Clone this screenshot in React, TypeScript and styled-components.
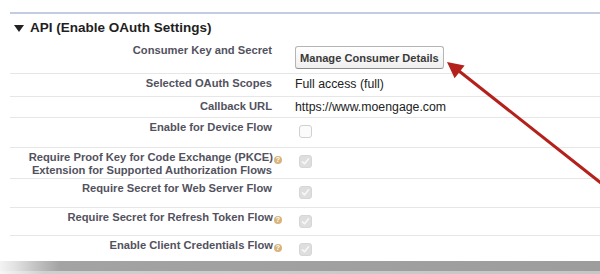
import React from "react";
import styled, { createGlobalStyle } from "styled-components";

const Global = createGlobalStyle`
  html, body { margin: 0; padding: 0; background: #fff; }
  body { font-family: "Liberation Sans", Arial, sans-serif; width: 600px; height: 274px; overflow: hidden; }
`;

const Page = styled.div`
  position: relative;
  width: 600px;
  height: 274px;
  padding-top: 12px;
  box-sizing: border-box;
  display: flex;
  flex-direction: column;
`;

const Section = styled.div`
  margin-left: 10px;
  border-top: 2px solid #c3cce0;
  display: flex;
  flex-direction: column;
`;

const Header = styled.div`
  height: 27px;
  box-sizing: border-box;
  padding: 0 0 0 4px;
  display: flex;
  align-items: center;
  align-self: flex-start;
  gap: 6px;
  font-weight: bold;
  font-size: 13.5px;
  line-height: 14px;
  color: #1f1f1f;
`;

const Caret = styled.span`
  width: 0;
  height: 0;
  border-left: 5px solid transparent;
  border-right: 5px solid transparent;
  border-top: 7px solid #222;
  margin-top: 1px;
`;

const Row = styled.div<{ $h: number; $last?: boolean }>`
  display: grid;
  grid-template-columns: 262px 1fr;
  column-gap: 23px;
  height: ${(p) => p.$h}px;
  box-sizing: border-box;
  border-bottom: ${(p) => (p.$last ? "none" : "1px solid #e6e6e6")};
`;

const Label = styled.div`
  text-align: right;
  padding-top: 3px;
  font-weight: bold;
  font-size: 11.2px;
  line-height: 12px;
  color: #52525e;
  white-space: nowrap;
`;

const Value = styled.div`
  padding-top: 3px;
  font-size: 12.3px;
  line-height: 14px;
  color: #222;
  white-space: nowrap;
`;

const Help = styled.span`
  display: inline-block;
  width: 8px;
  height: 8px;
  margin-left: 1px;
  margin-right: -10px;
  border-radius: 50%;
  background: #d8b47c;
  color: #fff;
  font-size: 7px;
  line-height: 8px;
  text-align: center;
  vertical-align: -1px;
  font-weight: bold;
`;

const Button = styled.button`
  margin-top: 2px;
  height: 23px;
  padding: 0 4px;
  box-sizing: border-box;
  border: 1px solid #b5b5b5;
  border-bottom-color: #8f8f8f;
  border-radius: 3px;
  background: linear-gradient(#ffffff, #efefef);
  font-family: "Liberation Sans", Arial, sans-serif;
  font-weight: bold;
  font-size: 11.1px;
  color: #3a3a3a;
  cursor: pointer;
`;

const Box = styled.span<{ $checked?: boolean }>`
  display: flex;
  align-items: center;
  justify-content: center;
  width: 13px;
  height: 13px;
  box-sizing: border-box;
  margin: 4px 0 0 4px;
  border-radius: 3px;
  border: 1px solid ${(p) => (p.$checked ? "#d6d6d6" : "#d0d0d0")};
  background: ${(p) => (p.$checked ? "#dedede" : "#fbfbfb")};
`;

const BottomBar = styled.div`
  margin-top: auto;
  height: 13px;
  display: flex;
  flex-direction: column;
`;

const BarDark = styled.div`
  height: 10px;
  background: linear-gradient(to right, #f3f3f3 0, #e2e2e2 15px, #c4c4c4 35px, #a3a3a3 60px, #9d9d9d 100%);
`;

const BarLight = styled.div`
  flex: 1;
  background: linear-gradient(to right, #f6f6f6 0, #e6e6e6 20px, #cfcfcf 45px, #c6c6c6 100%);
`;

const Overlay = styled.svg`
  position: absolute;
  left: 0;
  top: 0;
  pointer-events: none;
`;

const Check: React.FC<{ checked?: boolean }> = ({ checked }) => (
  <Box $checked={checked}>
    {checked && (
      <svg width="9" height="9" viewBox="0 0 9 9">
        <path d="M1.5 4.8 L3.6 6.8 L7.6 1.8" fill="none" stroke="#f7f7f7" strokeWidth="1.6" strokeLinecap="round" strokeLinejoin="round" />
      </svg>
    )}
  </Box>
);

type RowData = {
  label: React.ReactNode;
  h: number;
  value: React.ReactNode;
};

const rows: RowData[] = [
  { label: "Consumer Key and Secret", h: 33, value: <Button>Manage Consumer Details</Button> },
  { label: "Selected OAuth Scopes", h: 23, value: "Full access (full)" },
  { label: "Callback URL", h: 21, value: "https://www.moengage.com" },
  { label: "Enable for Device Flow", h: 30, value: <Check /> },
  {
    label: (
      <>
        Require Proof Key for Code Exchange (PKCE)<Help>?</Help>
        <br />
        Extension for Supported Authorization Flows
      </>
    ),
    h: 31,
    value: <Check checked />,
  },
  { label: "Require Secret for Web Server Flow", h: 29, value: <Check checked /> },
  { label: <>Require Secret for Refresh Token Flow<Help>?</Help></>, h: 28, value: <Check checked /> },
  { label: <>Enable Client Credentials Flow<Help>?</Help></>, h: 25, value: <Check checked /> },
];

export default function App() {
  return (
    <>
      <Global />
      <Page>
        <Section>
          <Header>
            <Caret />
            API (Enable OAuth Settings)
          </Header>
          {rows.map((r, i) => (
            <Row key={i} $h={r.h} $last={i === rows.length - 1}>
              <Label>{r.label}</Label>
              <Value>{r.value}</Value>
            </Row>
          ))}
        </Section>
        <BottomBar>
          <BarDark />
          <BarLight />
        </BottomBar>
        <Overlay width="600" height="274" viewBox="0 0 600 274">
          <line x1="459" y1="71" x2="606" y2="187" stroke="#b3211a" strokeWidth="3" />
          <polygon points="447,62 454.6,78.2 464.6,65.6" fill="#b3211a" />
        </Overlay>
      </Page>
    </>
  );
}
